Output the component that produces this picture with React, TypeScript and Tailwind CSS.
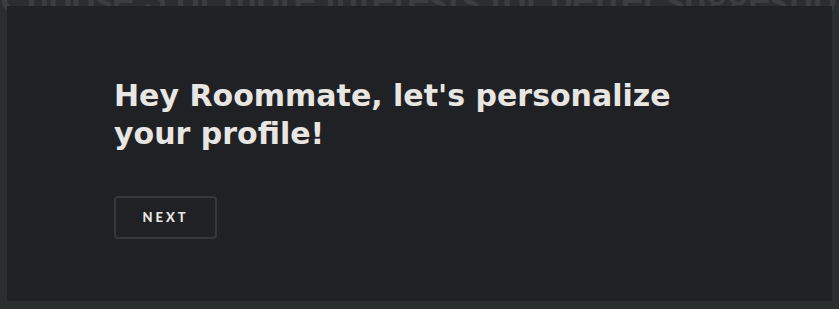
import React from "react";

export default function App() {
  return (
    <div className="relative w-[839px] h-[309px] overflow-hidden bg-[#2a2e2f]" style={{ fontFamily: "Lato, 'Noto Sans', sans-serif" }}>
      <div className="absolute left-0 top-[-22px] text-[40px] font-bold text-[#3a3e3f] whitespace-nowrap leading-none">
        Choose 3 or more interests for better suggestions
      </div>
      <div className="absolute left-[7px] top-[6px] w-[825px] h-[295px] bg-[#202124] px-[107px] pt-[71px]">
        <h1 className="text-[30px] leading-[38px] font-bold text-[#e8e6e3] w-[600px]" style={{ fontFamily: "'DejaVu Sans', sans-serif" }}>
          Hey Roommate, let's personalize your profile!
        </h1>
        <button className="mt-[43px] w-[103px] h-[43px] rounded-[4px] border-2 border-[#35373a] text-[#e8e6e3] text-[13px] font-black tracking-[3px] flex items-center justify-center">
          NEXT
        </button>
      </div>
    </div>
  );
}
